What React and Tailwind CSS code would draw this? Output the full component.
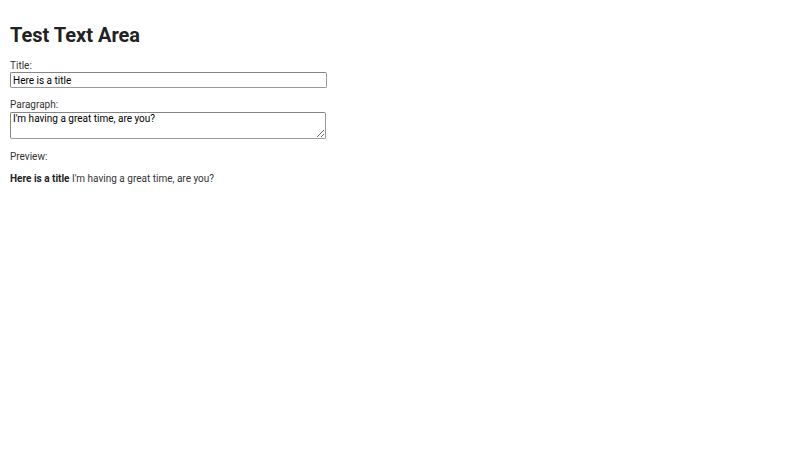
import { useState } from "react";

export default function App() {
  const [title, setTitle] = useState("Here is a title");
  const [paragraph, setParagraph] = useState("I'm having a great time, are you?");

  return (
    <div className="bg-white min-h-screen px-[10px] pt-[22px] text-[#222] font-['Roboto',sans-serif]">
      <h1 className="text-[20px] font-bold leading-[26px] mb-[12px]">Test Text Area</h1>

      <label className="block text-[10px] leading-[12px] text-[#333]">Title:</label>
      <input
        value={title}
        onChange={(e) => setTitle(e.target.value)}
        className="block w-[317px] h-[16px] border border-[#9a9a9a] border-t-[#858585] border-l-[#858585] rounded-[2px] px-[2px] text-[10px] leading-[12px] text-black"
      />

      <label className="block text-[10px] leading-[12px] mt-[11px] text-[#333]">Paragraph:</label>
      <textarea
        value={paragraph}
        onChange={(e) => setParagraph(e.target.value)}
        className="block w-[316px] h-[27px] mt-[1px] border border-[#9a9a9a] border-t-[#858585] border-l-[#858585] rounded-[2px] px-[2px] text-[10px] leading-[12px] text-black"
      />

      <p className="text-[10px] leading-[12px] mt-[12px] text-[#333]">Preview:</p>
      <p className="text-[10px] leading-[12px] mt-[10px] text-[#333]">
        <strong className="font-bold text-[#222]">{title}</strong> {paragraph}
      </p>
    </div>
  );
}
